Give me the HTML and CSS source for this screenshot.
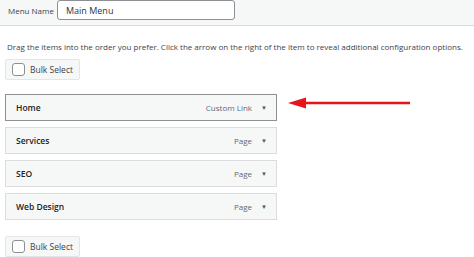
FILE: index.html
```html
<!DOCTYPE html>
<html lang="en">
<head>
  <meta charset="UTF-8">
  <title>Menu Structure</title>
  <link rel="stylesheet" href="styles.css">
</head>
<body>

  <div class="menu-header">
    <label class="name-label" for="menuName">Menu Name</label>
    <input type="text" id="menuName" class="name-input" value="Main Menu">
  </div>

  <p class="hint">Drag the items into the order you prefer. Click the arrow on the right of the item to reveal additional configuration options.</p>

  <div class="bulk"><span class="box"></span>Bulk Select</div>

  <ul class="items">
    <li class="item active">
      <span class="title">Home</span>
      <span class="type">Custom Link</span>
      <span class="caret">&#9660;</span>
      <svg class="pointer" width="124" height="12" viewBox="0 0 124 12">
        <line x1="12" y1="6" x2="122" y2="6" stroke="#e8141b" stroke-width="2.4"/>
        <polygon points="0,6 18,0.5 18,11.5" fill="#e8141b"/>
      </svg>
    </li>
    <li class="item">
      <span class="title">Services</span>
      <span class="type">Page</span>
      <span class="caret">&#9660;</span>
    </li>
    <li class="item">
      <span class="title">SEO</span>
      <span class="type">Page</span>
      <span class="caret">&#9660;</span>
    </li>
    <li class="item">
      <span class="title">Web Design</span>
      <span class="type">Page</span>
      <span class="caret">&#9660;</span>
    </li>
  </ul>

  <div class="bulk"><span class="box"></span>Bulk Select</div>

</body>
</html>
```

FILE: styles.css
```css
body {
  margin: 0;
  font-family: "Open Sans", Arial, sans-serif;
  font-size: 8px;
  color: #3c434a;
  background: #fff;
}
.menu-header {
  display: flex;
  align-items: center;
  height: 25px;
  padding-left: 8px;
  background: #f6f7f7;
  border-bottom: 1px solid #dcdcde;
}
.name-label {
  width: 49px;
  margin-top: -4px;
  white-space: nowrap;
}
.name-input {
  box-sizing: border-box;
  width: 178px;
  height: 20px;
  margin-top: -5px;
  padding: 0 8px;
  font-family: inherit;
  font-size: 9px;
  color: #2c3338;
  border: 1px solid #8c8f94;
  border-radius: 3px;
  background: #fff;
}
.hint {
  margin: 15px 0 0 7px;
  line-height: 12px;
  white-space: nowrap;
}
.bulk {
  display: inline-flex;
  align-items: center;
  gap: 5px;
  box-sizing: border-box;
  height: 21px;
  margin: 6px 0 0 5px;
  padding: 0 6px 0 6px;
  font-size: 8.5px;
  background: #f6f7f7;
  border: 1px solid #e4e5e7;
  border-radius: 2px;
}
.box {
  width: 11px;
  height: 11px;
  border: 1px solid #8c8f94;
  border-radius: 3px;
  background: #fff;
}
.items {
  list-style: none;
  margin: 14px 0 0 5px;
  padding: 0;
  width: 272px;
}
.item {
  position: relative;
  display: flex;
  align-items: center;
  box-sizing: border-box;
  height: 27px;
  margin-bottom: 6px;
  padding: 0 9px 0 10px;
  background: #f6f7f7;
  border: 1px solid #dcdcde;
}
.item.active {
  border-color: #8c8f94;
}
.title {
  flex: 1;
  font-size: 8.5px;
  font-weight: 600;
  color: #1d2327;
}
.type {
  color: #646970;
}
.caret {
  margin-left: 9px;
  font-size: 6px;
  color: #50575e;
}
.pointer {
  position: absolute;
  left: 282px;
  top: 2px;
}
.items + .bulk {
  margin-top: 10px;
}
```
